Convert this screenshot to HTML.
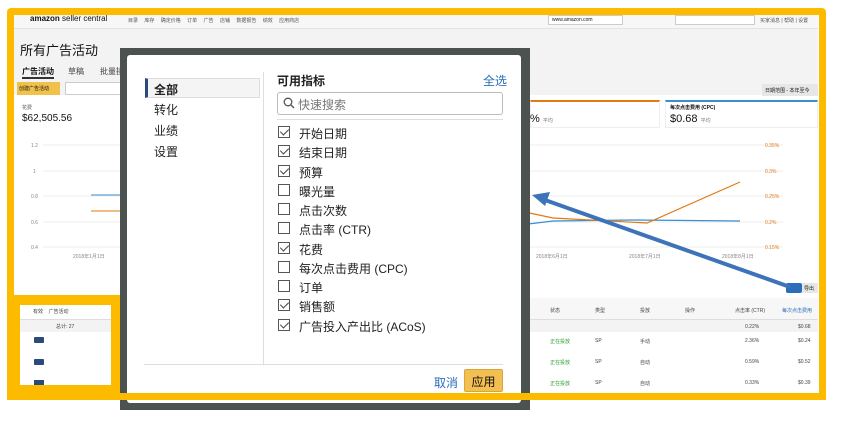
<!DOCTYPE html><html><head><meta charset="utf-8"><style>
*{margin:0;padding:0;box-sizing:border-box}
body{width:843px;height:424px;background:#fff;position:relative;overflow:hidden;font-family:"Liberation Sans","Noto Sans CJK SC",sans-serif;color:#111}
.a{position:absolute}
.s{font-size:5px;color:#555}
.t{font-size:12px;color:#222}
.cb{position:absolute;left:278px;width:12px;height:12px;border:1px solid #555;background:#fff}
.cb.c::after{content:"";position:absolute;left:3px;top:0px;width:4px;height:7px;border:solid #444;border-width:0 1.3px 1.3px 0;transform:rotate(45deg)}
.lb{position:absolute;left:299px;font-size:12px;color:#222}
</style></head><body>
<div class="a" style="left:13px;top:15px;width:805px;height:377px;background:#fff"></div>
<div class="a" style="left:13px;top:15px;width:805px;height:80px;background:#f3f3f3"></div>
<div class="a" style="left:13px;top:15px;width:805px;height:14px;background:#f7f7f7;border-bottom:1px solid #e3e3e3"></div>
<div class="a" style="left:30px;top:14px;font-size:8px;font-weight:bold">amazon<span style="font-weight:normal"> seller central</span></div>
<div class="a s" style="left:128px;top:17px;word-spacing:5px">目录 库存 确定价格 订单 广告 店铺 数据报告 绩效 应用商店</div>
<div class="a" style="left:548px;top:15px;width:75px;height:10px;border:1px solid #ccc;background:#fff;font-size:5px;padding:1px 3px">www.amazon.com</div>
<div class="a" style="left:675px;top:15px;width:80px;height:10px;border:1px solid #ccc;background:#fff"></div>
<div class="a s" style="left:760px;top:17px">买家消息 | 帮助 | 设置</div>
<div class="a" style="left:20px;top:40px;font-size:13px">所有广告活动</div>
<div class="a" style="left:22px;top:66px;font-size:8px;font-weight:bold;border-bottom:2px solid #333">广告活动</div>
<div class="a" style="left:68px;top:66px;font-size:8px;color:#444">草稿</div>
<div class="a" style="left:100px;top:66px;font-size:8px;color:#444">批量操</div>
<div class="a" style="left:17px;top:82px;width:43px;height:13px;background:#f0c14b;font-size:5px;padding:3px 2px">创建广告活动</div>
<div class="a" style="left:65px;top:82px;width:60px;height:13px;border:1px solid #ccc;background:#fff"></div>
<div class="a s" style="left:22px;top:104px">花费</div>
<div class="a" style="left:22px;top:113px;font-size:10px">$62,505.56</div>
<div class="a" style="left:530px;top:100px;width:130px;height:28px;border:1px solid #eee;border-top:2px solid #e47911"></div>
<div class="a" style="left:665px;top:100px;width:153px;height:28px;border:1px solid #eee;border-top:2px solid #3a8fd1"></div>
<div class="a" style="left:670px;top:104px;font-size:5px;font-weight:bold">每次点击费用 (CPC)</div>
<div class="a" style="left:670px;top:113px;font-size:11px">$0.68 <span style="font-size:5px;color:#777">平均</span></div>
<div class="a" style="left:530px;top:113px;font-size:11px">% <span style="font-size:5px;color:#777">平均</span></div>
<div class="a" style="left:762px;top:84px;width:56px;height:12px;background:#e7e7e7;font-size:5px;padding:3px">日期范围 - 本年至今</div>
<svg class="a" style="left:13px;top:135px" width="805" height="130">
<g stroke="#eee"><line x1="30" y1="10" x2="770" y2="10"/><line x1="30" y1="36" x2="770" y2="36"/><line x1="30" y1="61" x2="770" y2="61"/><line x1="30" y1="87" x2="770" y2="87"/><line x1="30" y1="112" x2="770" y2="112"/></g>
<g font-size="5" fill="#888"><text x="18" y="12">1.2</text><text x="20" y="38">1</text><text x="18" y="63">0.8</text><text x="18" y="89">0.6</text><text x="18" y="114">0.4</text>
<text x="60" y="123">2018年1月1日</text><text x="523" y="123">2018年6月1日</text><text x="616" y="123">2018年7月1日</text><text x="709" y="123">2018年8月1日</text></g>
<g font-size="5" fill="#e47911"><text x="752" y="12">0.35%</text><text x="752" y="38">0.3%</text><text x="752" y="63">0.25%</text><text x="752" y="89">0.2%</text><text x="752" y="114">0.15%</text></g>
<polyline points="78,60 110,60" stroke="#3a8fd1" fill="none"/>
<polyline points="78,76 110,76" stroke="#e47911" fill="none"/>
<polyline points="507,90 540,86 620,85 727,86" stroke="#3a8fd1" fill="none" stroke-width="1.2"/>
<polyline points="507,76 540,83 634,88 727,47" stroke="#e47911" fill="none" stroke-width="1.2"/>
</svg>
<div class="a" style="left:530px;top:298px;width:288px;height:94px;font-size:5px;color:#444">
<div style="position:absolute;top:0;width:100%;height:22px;background:#f7f7f7;border-bottom:1px solid #ddd"></div>
<div style="position:absolute;top:22px;width:100%;height:12px;background:#f3f3f3"></div>
<span style="position:absolute;left:20px;top:9px">状态</span><span style="position:absolute;left:65px;top:9px">类型</span><span style="position:absolute;left:110px;top:9px">投放</span><span style="position:absolute;left:155px;top:9px">操作</span><span style="position:absolute;left:205px;top:9px">点击率 (CTR)</span><span style="position:absolute;left:252px;top:9px;color:#2a6ebb">每次点击费用</span>
<span style="position:absolute;left:215px;top:26px">0.22%</span><span style="position:absolute;left:268px;top:26px">$0.68</span>
<span style="position:absolute;left:20px;top:40px;color:#2a9d2a">正在投放</span><span style="position:absolute;left:65px;top:40px">SP</span><span style="position:absolute;left:110px;top:40px">手动</span><span style="position:absolute;left:215px;top:40px">2.36%</span><span style="position:absolute;left:268px;top:40px">$0.24</span>
<span style="position:absolute;left:20px;top:61px;color:#2a9d2a">正在投放</span><span style="position:absolute;left:65px;top:61px">SP</span><span style="position:absolute;left:110px;top:61px">自动</span><span style="position:absolute;left:215px;top:61px">0.59%</span><span style="position:absolute;left:268px;top:61px">$0.52</span>
<span style="position:absolute;left:20px;top:82px;color:#2a9d2a">正在投放</span><span style="position:absolute;left:65px;top:82px">SP</span><span style="position:absolute;left:110px;top:82px">自动</span><span style="position:absolute;left:215px;top:82px">0.33%</span><span style="position:absolute;left:268px;top:82px">$0.39</span>
</div>
<div class="a" style="left:786px;top:283px;width:16px;height:10px;background:#2a6ebb;border-radius:2px"></div>
<div class="a" style="left:802px;top:283px;width:16px;height:10px;background:#e7e7e7;font-size:5px;padding:2px">导出</div>
<div class="a" style="left:7px;top:8px;width:819px;height:392px;border:7px solid #fdbb00;border-radius:4px"></div>
<div class="a" style="left:7px;top:295px;width:116px;height:105px;background:#fdbb00;border-radius:4px"></div>
<div class="a" style="left:20px;top:305px;width:91px;height:80px;background:#fff;font-size:5px;color:#444">
<div style="position:absolute;top:0;width:100%;height:15px;border-bottom:1px solid #ddd;padding:3px 13px">有效 &nbsp;&nbsp; 广告活动</div>
<div style="position:absolute;top:15px;width:100%;height:12px;background:#f3f3f3;padding:3px 36px">总计: 27</div>
<div style="position:absolute;left:14px;top:32px;width:10px;height:6px;background:#2a4a7a;border-radius:1px"></div>
<div style="position:absolute;left:14px;top:54px;width:10px;height:6px;background:#2a4a7a;border-radius:1px"></div>
<div style="position:absolute;left:14px;top:75px;width:10px;height:5px;background:#2a4a7a"></div>
</div>
<div class="a" style="left:120px;top:48px;width:410px;height:362px;background:#4c5250"></div>
<div class="a" style="left:127px;top:55px;width:394px;height:348px;background:#fff;border-radius:3px"></div>
<div class="a" style="left:145px;top:78px;width:115px;height:20px;background:#f4f4f4;border:1px solid #ddd;border-left:3px solid #2a4a7a"></div>
<div class="a t" style="left:154px;top:81px;font-weight:bold">全部</div>
<div class="a t" style="left:154px;top:101px">转化</div>
<div class="a t" style="left:154px;top:122px">业绩</div>
<div class="a t" style="left:154px;top:143px">设置</div>
<div class="a" style="left:263px;top:72px;width:1px;height:293px;background:#ddd"></div>
<div class="a t" style="left:277px;top:72px;font-weight:bold">可用指标</div>
<div class="a" style="left:483px;top:72px;font-size:12px;color:#2a6ebb">全选</div>
<div class="a" style="left:277px;top:92px;width:226px;height:23px;border:1px solid #bbb;border-radius:3px"></div>
<svg class="a" style="left:283px;top:97px" width="12" height="12"><circle cx="5" cy="5" r="3.8" stroke="#555" stroke-width="1.3" fill="none"/><line x1="8" y1="8" x2="11" y2="11" stroke="#555" stroke-width="1.4"/></svg>
<div class="a" style="left:298px;top:96px;font-size:12px;color:#777">快速搜索</div>
<div class="a" style="left:277px;top:119px;width:226px;height:1px;background:#ddd"></div>
<div class="cb c" style="top:126px"></div><div class="lb" style="top:125px">开始日期</div>
<div class="cb c" style="top:145px"></div><div class="lb" style="top:144px">结束日期</div>
<div class="cb c" style="top:165px"></div><div class="lb" style="top:164px">预算</div>
<div class="cb" style="top:184px"></div><div class="lb" style="top:183px">曝光量</div>
<div class="cb" style="top:203px"></div><div class="lb" style="top:202px">点击次数</div>
<div class="cb" style="top:222px"></div><div class="lb" style="top:221px">点击率 (CTR)</div>
<div class="cb c" style="top:242px"></div><div class="lb" style="top:241px">花费</div>
<div class="cb" style="top:261px"></div><div class="lb" style="top:260px">每次点击费用 (CPC)</div>
<div class="cb" style="top:280px"></div><div class="lb" style="top:279px">订单</div>
<div class="cb c" style="top:299px"></div><div class="lb" style="top:298px">销售额</div>
<div class="cb c" style="top:319px"></div><div class="lb" style="top:318px">广告投入产出比 (ACoS)</div>
<div class="a" style="left:144px;top:364px;width:359px;height:1px;background:#ddd"></div>
<div class="a" style="left:434px;top:374px;font-size:12px;color:#2a6ebb">取消</div>
<div class="a" style="left:464px;top:369px;width:39px;height:23px;background:#f4bf52;border:1px solid #d9a53a;border-radius:2px;font-size:12px;text-align:center;padding-top:3px">应用</div>
<div class="a" style="left:7px;top:393px;width:819px;height:7px;background:#fdbb00"></div>
<svg class="a" style="left:0;top:0" width="843" height="424"><line x1="545" y1="200" x2="790" y2="287" stroke="#3d73b8" stroke-width="4"/><polygon points="532,195 550,192 545,206" fill="#3d73b8"/></svg>
</body></html>
